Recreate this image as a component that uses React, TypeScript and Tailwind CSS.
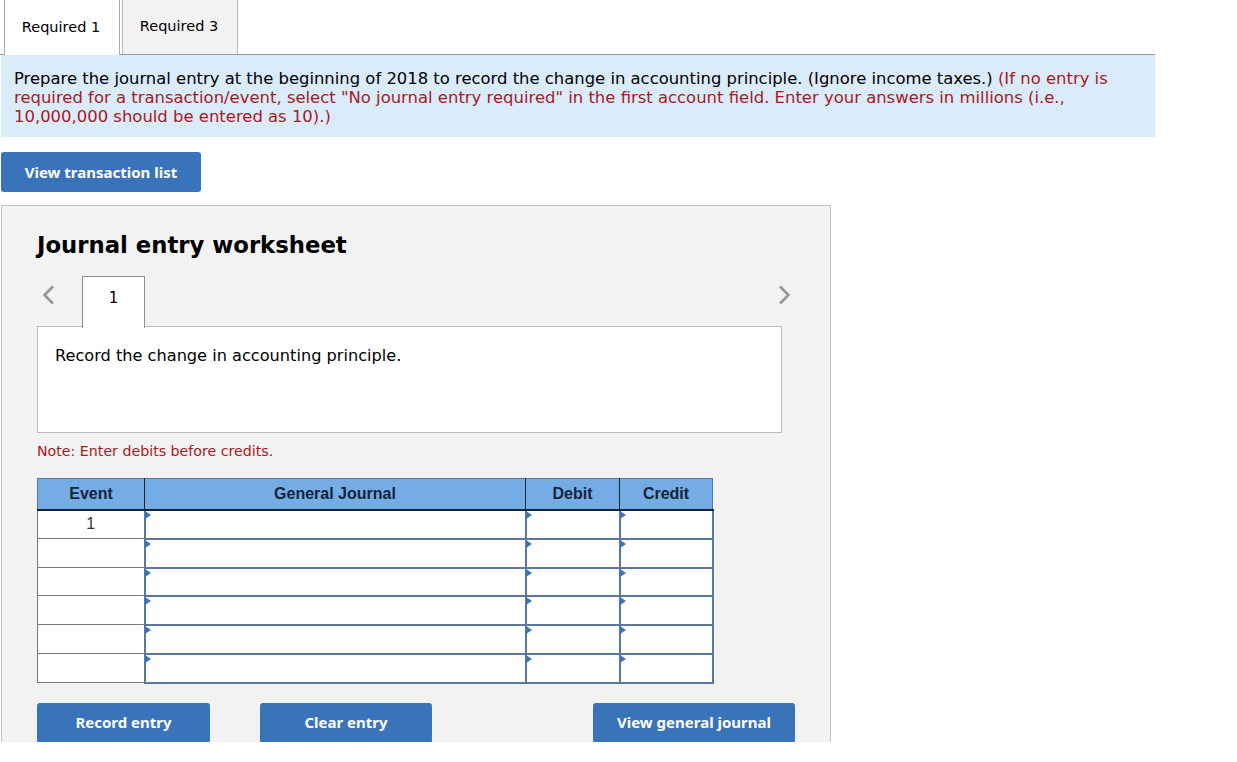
const rows = ["1", "", "", "", "", ""];
const rowHeights = ["h-[29px]", "h-[29px]", "h-[28px]", "h-[29px]", "h-[29px]", "h-[29px]"];

function InputCell() {
  return (
    <td className="relative border-2 border-[#5b789b] bg-white p-0">
      <span className="absolute top-0 -left-px h-0 w-0 border-y-[4.5px] border-l-[6px] border-y-transparent border-l-[#3a73b8]" />
    </td>
  );
}

function ActionButton({ label, className }: { label: string; className: string }) {
  return (
    <button
      className={`h-10 rounded-[3px] bg-[#3973b9] font-['Noto_Sans'] text-[15px] font-bold text-white ${className}`}
    >
      {label}
    </button>
  );
}

function Arrow({ flip, className }: { flip?: boolean; className: string }) {
  return (
    <svg viewBox="0 0 14 20" className={`h-5 w-[14px] text-[#959595] ${className}`}>
      <path
        d={flip ? "M2 1.5 L10.5 10 L2 18.5" : "M12 1.5 L3.5 10 L12 18.5"}
        fill="none"
        stroke="currentColor"
        strokeWidth="2.6"
      />
    </svg>
  );
}

export default function App() {
  return (
    <div className="h-[742px] w-[1237px] overflow-hidden bg-white font-['DejaVu_Sans',sans-serif] text-black">
      <div className="w-[1155px]">
        <div className="flex h-[55px] items-stretch gap-[2px] border-b border-[#999] pl-1">
          <div className="relative flex h-[55px] w-[116px] items-center justify-center border-x border-[#aaa] bg-white pr-[2px] text-[14.5px]">
            Required 1
          </div>
          <div className="flex w-[116px] items-center justify-center border-x border-[#bbb] bg-[#f2f2f2] pr-[2px] text-[14.5px]">
            Required 3
          </div>
        </div>
        <div className="ml-px h-[82px] bg-[#daebf9] px-[13px] pt-[14px] text-[16.42px] leading-[19px]">
          Prepare the journal entry at the beginning of 2018 to record the change in accounting
          principle. (Ignore income taxes.){" "}
          <span className="text-[16.46px] text-[#a81a1f]">
            (If no entry is required for a transaction/event, select "No journal entry required" in
            the first account field. Enter your answers in millions (i.e., 10,000,000 should be
            entered as 10).)
          </span>
        </div>
      </div>

      <ActionButton label="View transaction list" className="mt-[15px] ml-px w-[200px]" />

      <div className="mt-[13px] ml-px h-[600px] w-[830px] border border-[#c4c4c4] bg-[#f2f2f2] pl-[35px]">
        <h2 className="pt-[24px] text-[22.75px] leading-[30px] font-bold">Journal entry worksheet</h2>

        <div className="relative mt-[16px] flex h-[50px] w-[745px] items-start">
          <Arrow className="mt-[9px] ml-[4px]" />
          <div className="relative z-10 ml-[27px] flex h-[52px] w-[63px] items-start justify-center border-x border-t border-[#8e8e8e] bg-white pt-[11px] text-[15px] leading-[20px]">
            1
          </div>
          <Arrow flip className="absolute top-[9px] right-[-10px]" />
        </div>

        <div className="h-[107px] w-[745px] border border-[#bdbdbd] bg-white px-[17px] pt-[19px] text-[16.17px] leading-[20px]">
          Record the change in accounting principle.
        </div>

        <p className="mt-[9px] text-[14.2px] leading-[18px] text-[#a81a1f]">Note: Enter debits before credits.</p>

        <table className="mt-[18px] w-[675px] table-fixed border-collapse font-['Liberation_Sans',sans-serif]">
          <colgroup>
            <col className="w-[107px]" />
            <col className="w-[381px]" />
            <col className="w-[94px]" />
            <col className="w-[93px]" />
          </colgroup>
          <thead>
            <tr className="h-[31px] border border-[#5b789b] bg-[#75ace6] text-[16px] font-bold text-[#12243a]">
              <th className="border-r border-b-2 border-[#12243a] pt-px font-bold">Event</th>
              <th className="border-r border-b-2 border-[#12243a] pt-px font-bold">General Journal</th>
              <th className="border-r border-b-2 border-[#12243a] pt-px font-bold">Debit</th>
              <th className="border-b-2 border-[#12243a] pt-px font-bold">Credit</th>
            </tr>
          </thead>
          <tbody>
            {rows.map((event, i) => (
              <tr key={i} className={rowHeights[i]}>
                <td className="border border-[#7b7b7b] bg-white text-center text-[16px] text-[#333]">{event}</td>
                <InputCell />
                <InputCell />
                <InputCell />
              </tr>
            ))}
          </tbody>
        </table>

        <div className="mt-[19px] flex w-[758px]">
          <ActionButton label="Record entry" className="w-[173px]" />
          <ActionButton label="Clear entry" className="ml-[50px] w-[172px]" />
          <ActionButton label="View general journal" className="ml-auto w-[202px]" />
        </div>
      </div>
    </div>
  );
}
